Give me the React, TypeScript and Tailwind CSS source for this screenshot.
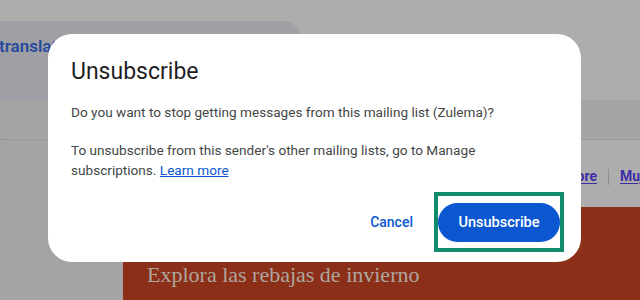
export default function App() {
  return (
    <div className="relative w-[640px] h-[300px] overflow-hidden bg-[#adadad] font-['Roboto',sans-serif]">
      {/* page behind the dimmed overlay */}
      <div className="flex flex-col h-full">
        <div className="h-[21px] shrink-0" />
        <div className="flex h-[79px] shrink-0">
          <div className="w-[300px] bg-[#9fa0a5] rounded-tr-[16px] pt-[14px]">
            <span className="block -ml-[1px] text-[17px] font-semibold text-[#274a9e] leading-[22px]">translate</span>
          </div>
        </div>
        <div className="h-[40px] shrink-0 bg-[#a5a5a5] border-b border-dotted border-[#8f8f8f]" />
        <div className="flex flex-1">
          <div className="w-[123px] bg-[#a4a4a4] shrink-0" />
          <div className="flex-1 flex flex-col">
            <div className="h-[67px] flex items-center justify-end pt-[6px] whitespace-nowrap overflow-hidden">
              <span className="text-[14px] font-bold text-[#3e2ea6] underline underline-offset-2">Explore</span>
              <span className="mx-[11px] w-px h-[16px] bg-[#8e8e8e] shrink-0" />
              <span className="w-[20px] overflow-hidden text-[14px] font-bold text-[#3e2ea6] underline underline-offset-2">Muj</span>
            </div>
            <div className="flex-1 bg-[#8c2f18] pl-[24px] pt-[55px]">
              <span className="font-['Liberation_Serif',serif] text-[22px] leading-[26px] text-[#aea69f] whitespace-nowrap">Explora las rebajas de invierno</span>
            </div>
          </div>
        </div>
      </div>

      {/* dialog */}
      <div className="absolute left-[48px] top-[34px] w-[533px] h-[228px] bg-white rounded-[24px] px-[23px] pt-[22px] pb-[10px] flex flex-col">
        <h2 className="text-[23px] leading-[32px] text-[#1f1f1f] font-normal">Unsubscribe</h2>
        <p className="mt-[14px] text-[13.6px] leading-[20px] text-[#444746]">
          Do you want to stop getting messages from this mailing list (Zulema)?
        </p>
        <p className="mt-[18px] text-[13.6px] leading-[20px] text-[#444746]">
          To unsubscribe from this sender's other mailing lists, go to Manage subscriptions.{' '}
          <a className="text-[#0b57d0] underline">Learn more</a>
        </p>
        <div className="mt-auto flex items-center justify-end -mr-[6px]">
          <button className="text-[14px] font-medium text-[#0b57d0] px-[2px] mr-[19px]">Cancel</button>
          <div className="border-4 border-[#128a6c] pt-[7px] pb-[6px]">
            <button className="w-[122px] h-[39px] rounded-full bg-[#0b57d0] text-white text-[14.5px] font-medium">Unsubscribe</button>
          </div>
        </div>
      </div>
    </div>
  );
}
